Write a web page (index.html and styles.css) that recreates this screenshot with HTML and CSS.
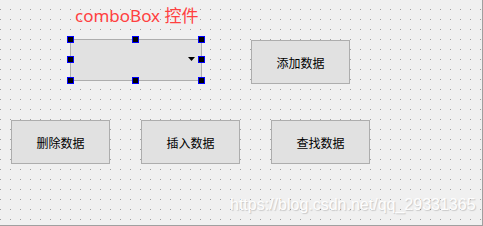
FILE: index.html
```html
<!DOCTYPE html>
<html lang="zh-CN">
<head>
<meta charset="UTF-8">
<title>Form Designer</title>
<link rel="stylesheet" href="styles.css">
</head>
<body>
<div class="form">
    <div class="row row-top">
        <div class="combo-group">
            <div class="combo-label">comboBox 控件</div>
            <div class="combo">
                <svg class="combo-arrow" width="7" height="4" viewBox="0 0 7 4"><polygon points="0,0 7,0 3.5,4" fill="#000"/></svg>
                <span class="handle h-tl"></span>
                <span class="handle h-tm"></span>
                <span class="handle h-tr"></span>
                <span class="handle h-ml"></span>
                <span class="handle h-mr"></span>
                <span class="handle h-bl"></span>
                <span class="handle h-bm"></span>
                <span class="handle h-br"></span>
            </div>
        </div>
        <button class="btn btn-add">添加数据</button>
    </div>
    <div class="row row-bottom">
        <button class="btn">删除数据</button>
        <button class="btn">插入数据</button>
        <button class="btn">查找数据</button>
    </div>
    <div class="watermark">https://blog.csdn.net/qq_29331365</div>
</div>
</body>
</html>
```

FILE: styles.css
```css
body {
    margin: 0;
    background-color: #f0f0f0;
}
.form {
    position: relative;
    width: 483px;
    height: 226px;
    box-sizing: border-box;
    border-right: 1px solid #a0a0a0;
    border-bottom: 1px solid #a0a0a0;
    background-color: #f0f0f0;
    background-image: conic-gradient(from 270deg at 1px 1px, #a0a0a0 90deg, transparent 0);
    background-size: 10px 10px;
    background-position: 0 9px;
    overflow: hidden;
}
.row {
    display: flex;
    align-items: flex-start;
}
.row-top {
    height: 120px;
}
.combo-group {
    margin-left: 70px;
    width: 132px;
}
.combo-label {
    height: 39px;
    box-sizing: border-box;
    padding: 6px 0 0 5px;
    font-family: "Noto Sans", "Noto Sans CJK SC", sans-serif;
    font-size: 17px;
    line-height: 20px;
    color: #ff4040;
    white-space: nowrap;
}
.combo {
    position: relative;
    height: 42px;
    box-sizing: border-box;
    border: 1px solid #adadad;
    background-color: #e1e1e1;
}
.combo-arrow {
    position: absolute;
    left: 117px;
    top: 17px;
}
.handle {
    position: absolute;
    box-sizing: border-box;
    width: 7px;
    height: 7px;
    border: 1px solid #0000ff;
    background-color: #000;
}
.h-tl, .h-ml, .h-bl { left: -4px; }
.h-tm, .h-bm { left: 61px; }
.h-tr, .h-mr, .h-br { left: 127px; }
.h-tl, .h-tm, .h-tr { top: -4px; }
.h-ml, .h-mr { top: 16px; }
.h-bl, .h-bm, .h-br { top: 37px; }
.btn {
    width: 99px;
    height: 44px;
    margin: 0;
    padding: 0;
    border: 1px solid #adadad;
    border-radius: 0;
    background-color: #e1e1e1;
    color: #000;
    font-family: "Noto Sans CJK SC", sans-serif;
    font-size: 12px;
}
.btn-add {
    margin-left: 49px;
    margin-top: 40px;
}
.row-bottom {
    padding-left: 11px;
    gap: 31px;
}
.watermark {
    position: absolute;
    left: 230px;
    top: 196px;
    font-family: "Liberation Sans", sans-serif;
    font-size: 16px;
    line-height: 18px;
    color: #ffffff;
    text-shadow: 1px 1px 1px rgba(0, 0, 0, 0.18);
    opacity: 0.9;
}
```
